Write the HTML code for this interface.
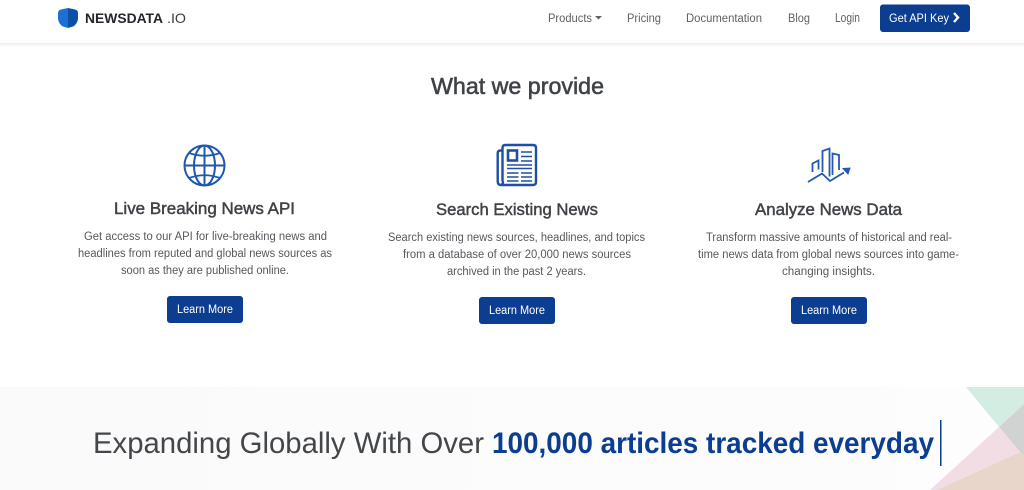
<!DOCTYPE html>
<html lang="en"><head><meta charset="utf-8"><title>NewsData.io</title>
<style>
html,body{margin:0;padding:0;background:#fff;width:1024px;height:490px;overflow:hidden}
svg{display:block}
text{font-family:"Liberation Sans",sans-serif}
.n{font-size:11.5px;fill:#5f6266}
.p{font-size:11.5px;fill:#55585c}
.h{font-size:16.5px;fill:#3f4246;stroke:#3f4246;stroke-width:.45px}
.b{font-size:11.5px;fill:#fff}
</style></head><body>
<svg width="1024" height="490" viewBox="0 0 1024 490" xmlns="http://www.w3.org/2000/svg">
<defs>
<linearGradient id="s" x1="0" y1="0" x2="0" y2="1"><stop offset="0" stop-color="#ececec"/><stop offset="1" stop-color="#fff"/></linearGradient>
<linearGradient id="g" x1="0" y1="0" x2="1" y2="0"><stop offset="0" stop-color="#fafafa"/><stop offset="1" stop-color="#fdfdfd"/></linearGradient>
</defs>
<rect width="1024" height="490" fill="#fff"/>
<rect x="0" y="43" width="1024" height="4" fill="url(#s)"/>

<path d="M68 8L61 9.500Q58 10.200 58 13V19Q59 24.500 63 26.500L68 28Z" fill="#1c6fd6"/>
<path d="M68 8L75 9.500Q78 10.200 78 13V19Q77 24.500 73 26.500L68 28Z" fill="#0f4fa8"/>
<text x="85" y="23" font-weight="700" fill="#23272b" textLength="78" lengthAdjust="spacingAndGlyphs" style="font-size:14px;font-weight:700">NEWSDATA</text>
<text x="167" y="23" fill="#3a3e42" textLength="19" lengthAdjust="spacingAndGlyphs" style="font-size:14px">.IO</text>

<text class="n" x="548" y="22" textLength="44" lengthAdjust="spacingAndGlyphs">Products</text>
<path d="M595 16h7l-3.500 3.500z" fill="#5f6266"/>
<text class="n" x="627" y="22" textLength="34" lengthAdjust="spacingAndGlyphs">Pricing</text>
<text class="n" x="686" y="22" textLength="76" lengthAdjust="spacingAndGlyphs">Documentation</text>
<text class="n" x="788" y="22" textLength="22" lengthAdjust="spacingAndGlyphs">Blog</text>
<text class="n" x="835" y="22" textLength="25" lengthAdjust="spacingAndGlyphs" style="font-size:12.500px">Login</text>
<rect x="880" y="4.500" width="90" height="27.500" rx="3" fill="#0b3d91"/>
<text class="b" x="889" y="22" textLength="60" lengthAdjust="spacingAndGlyphs">Get API Key</text>
<path d="M954 13l4 4.500-4 4.500" fill="none" stroke="#fff" stroke-width="2.400"/>

<text x="431" y="94" fill="#3f4246" stroke="#3f4246" stroke-width=".55" textLength="173" lengthAdjust="spacingAndGlyphs" style="font-size:23px">What we provide</text>

<g fill="none" stroke="#1f57ad" stroke-width="2">
<circle cx="204.500" cy="165.500" r="20"/>
<ellipse cx="204.500" cy="165.500" rx="10.500" ry="20"/>
<path d="M204.500 145.500v40M184.500 165.500h40"/>
<path d="M189 153q15.500 5.500 31 0M189 178q15.500-5.500 31 0" stroke-width="1.800"/>
</g>

<g fill="none" stroke="#1f4fa3">
<path d="M502 150.500h-1.500q-2.800 0-2.800 2.800v28q0 3.700 3.300 3.700M502.500 181.500v-33.500q0-3 3-3h27.500q3 0 3 3v34q0 3-3 3h-32.500q2.500 0 2.500-3.500" stroke-width="2.400" stroke-linejoin="round"/>
<rect x="508" y="150.500" width="9" height="10" stroke-width="2.600"/>
<path d="M521 152h11M521 156.500h11M521 161h11M507 165h25M507 168.500h25M507 173h11.500M521 173h11M507 177h11.500M521 177h11M507 181h11.500M521 181h11" stroke-width="1.500"/>
</g>

<g fill="none" stroke="#2559ae" stroke-width="1.800">
<path d="M808 182l14-8.500 8 7.500 14-8.500"/>
<path d="M812.500 172v-8.500l6-3v9M822.500 172v-21l7-2.500v28M832.500 175v-21.500l6.500 1.500v15"/>
<path d="M843 168.500l7-.500-2 6z" fill="#2559ae" stroke-width="1"/>
</g>

<text class="h" x="114" y="214" textLength="181" lengthAdjust="spacingAndGlyphs">Live Breaking News API</text>
<text class="h" x="436" y="215" textLength="162" lengthAdjust="spacingAndGlyphs">Search Existing News</text>
<text class="h" x="755" y="215" textLength="147" lengthAdjust="spacingAndGlyphs">Analyze News Data</text>

<text class="p" x="84" y="240" textLength="243" lengthAdjust="spacingAndGlyphs">Get access to our API for live-breaking news and</text>
<text class="p" x="78" y="257" textLength="254" lengthAdjust="spacingAndGlyphs">headlines from reputed and global news sources as</text>
<text class="p" x="121" y="274" textLength="168" lengthAdjust="spacingAndGlyphs">soon as they are published online.</text>

<text class="p" x="388" y="241" textLength="257" lengthAdjust="spacingAndGlyphs">Search existing news sources, headlines, and topics</text>
<text class="p" x="403" y="258" textLength="228" lengthAdjust="spacingAndGlyphs">from a database of over 20,000 news sources</text>
<text class="p" x="447" y="275" textLength="139" lengthAdjust="spacingAndGlyphs">archived in the past 2 years.</text>

<text class="p" x="706" y="241" textLength="246" lengthAdjust="spacingAndGlyphs">Transform massive amounts of historical and real-</text>
<text class="p" x="698" y="258" textLength="261" lengthAdjust="spacingAndGlyphs">time news data from global news sources into game-</text>
<text class="p" x="782" y="275" textLength="93" lengthAdjust="spacingAndGlyphs">changing insights.</text>

<rect x="167" y="296" width="76" height="27" rx="3" fill="#0b3d91"/>
<text class="b" x="177" y="313" textLength="56" lengthAdjust="spacingAndGlyphs">Learn More</text>
<rect x="479" y="297" width="76" height="27" rx="3" fill="#0b3d91"/>
<text class="b" x="489" y="314" textLength="56" lengthAdjust="spacingAndGlyphs">Learn More</text>
<rect x="791" y="297" width="76" height="27" rx="3" fill="#0b3d91"/>
<text class="b" x="801" y="314" textLength="56" lengthAdjust="spacingAndGlyphs">Learn More</text>

<rect x="0" y="387" width="1024" height="103" fill="url(#g)"/>
<polygon points="966,387 1024,387 1024,404 999,427" fill="#d3ede3"/>
<polygon points="999,427 1024,404 1024,456 1020,452" fill="#d0d3d2"/>
<polygon points="999,427 1020,452 937,490 930,490" fill="#f3dde4"/>
<polygon points="937,490 1020,452 1024,456 1024,490" fill="#e8d6cb"/>

<text x="93" y="453" fill="#43464a" textLength="391" lengthAdjust="spacingAndGlyphs" style="font-size:30px">Expanding Globally With Over</text>
<text x="492" y="453" fill="#0b3d91" font-weight="700" textLength="442" lengthAdjust="spacingAndGlyphs" style="font-size:30px;font-weight:700">100,000 articles tracked everyday</text>
<rect x="940" y="420" width="1.500" height="46" fill="#0b3d91"/>
</svg>
</body></html>
